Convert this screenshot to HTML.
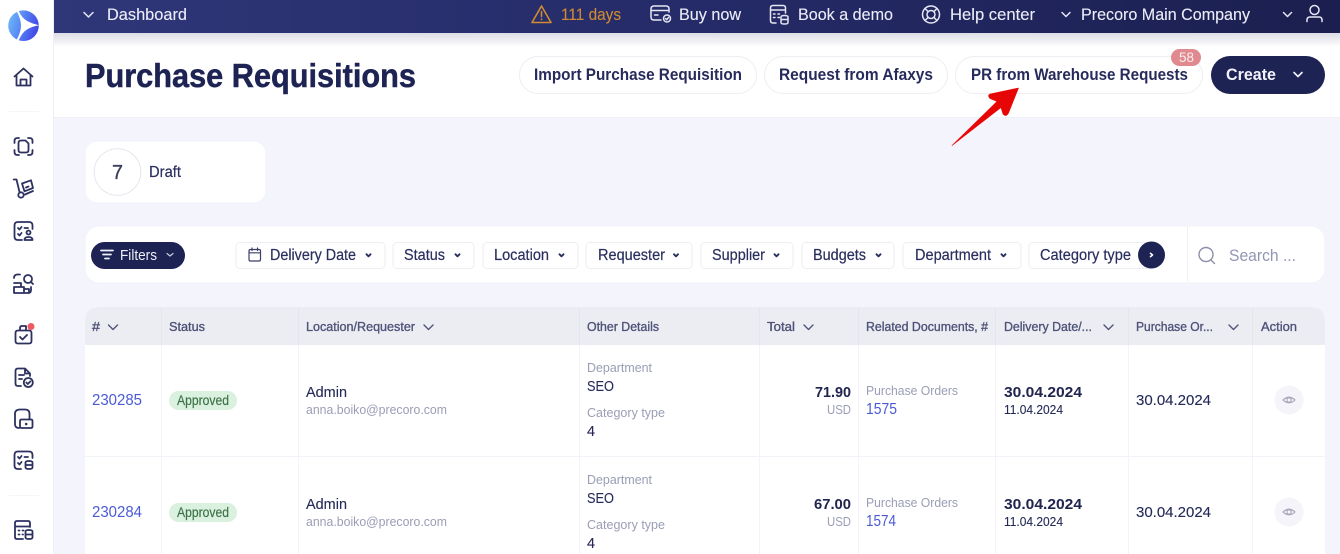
<!DOCTYPE html>
<html><head><meta charset="utf-8"><title>Purchase Requisitions</title>
<style>
html,body{margin:0;padding:0;background:#f4f5fc;overflow:hidden}
svg{display:block;filter:blur(.3px)}
text{font-family:"Liberation Sans",sans-serif;white-space:pre}
.nav{font-size:17px;fill:#eceDf8;stroke:#eceDf8;stroke-width:.12}
.btn{font-size:16.5px;font-weight:bold;fill:#262b5c}
.f{font-size:15.5px;fill:#2a2f5e;stroke:#2a2f5e;stroke-width:.2}
.h{font-size:13px;fill:#4f5378;stroke:#4f5378;stroke-width:.35}
.b{font-size:15px;fill:#252a58;stroke:#252a58;stroke-width:.12}
.g{font-size:13px;fill:#9a9db5}
.l{font-size:15.5px;fill:#4a5ad6}
.bb{font-size:15px;font-weight:bold;fill:#20254f}
.ap{font-size:13.5px;fill:#3d7047;stroke:#3d7047;stroke-width:.15}
.s{fill:none;stroke:#2c3160;stroke-width:1.8;stroke-linecap:round;stroke-linejoin:round}
.w{fill:none;stroke:#e6e7f3;stroke-width:1.5;stroke-linecap:round;stroke-linejoin:round}
.c{fill:none;stroke:#2a2f5e;stroke-width:1.9;stroke-linecap:round;stroke-linejoin:round}
.hc{fill:none;stroke:#4f5378;stroke-width:1.4;stroke-linecap:round;stroke-linejoin:round}
</style></head><body>
<svg width="1340" height="554" viewBox="0 0 1340 554" xmlns="http://www.w3.org/2000/svg">
<defs>
<linearGradient id="top" x1="0" x2="1" y1="0" y2="0"><stop offset="0" stop-color="#2f3779"/><stop offset=".5" stop-color="#252b68"/><stop offset="1" stop-color="#1b1f4f"/></linearGradient>
<linearGradient id="shd" x1="0" x2="0" y1="0" y2="1"><stop offset="0" stop-color="#8a8ca8" stop-opacity=".3"/><stop offset="1" stop-color="#8a8ca8" stop-opacity="0"/></linearGradient>
<linearGradient id="logo" x1="0" x2="1" y1="0" y2=".3"><stop offset="0" stop-color="#6ec0fa"/><stop offset=".45" stop-color="#5c8ff5"/><stop offset="1" stop-color="#434ce8"/></linearGradient>
</defs>
<rect width="1340" height="554" fill="#f4f5fc"/>
<!-- sidebar -->
<rect width="54" height="554" fill="#fff"/>
<circle cx="23.500" cy="25.700" r="15.300" fill="url(#logo)"/>
<path d="M16.500 11L18.500 10.600Q22 18.500 28 21.500Q33 24 39 25.300Q32 26.500 27 29.500Q22 32.500 18.500 40.600L16.500 40.200Q21 32 21 25.500Q21 19 16.500 11Z" fill="#fff"/>
<path class="s" d="M14.500 76.500L23.500 68.500L32.500 76.500M16.500 75V85.500H30.500V75M20.500 85.500V79.500H26.500V85.500"/>
<line x1="9" x2="39" y1="111.500" y2="111.500" stroke="#f6f6fa"/>
<path class="s" d="M14.500 143V141Q14.500 138 17.500 138H19M28 138H29.500Q32.500 138 32.500 141V143M32.500 150V152Q32.500 155 29.500 155H28M19 155H17.500Q14.500 155 14.500 152V150"/>
<path class="s" d="M18.500 143Q18.500 140.500 21 140.500H25.500L28.500 143.500V150Q28.500 152.500 26 152.500H21Q18.500 152.500 18.500 150Z"/>
<path class="s" d="M13.700 179.500H16.500L19.500 192M22 183.500L31 180.300L33 188L24.500 191.300ZM25 194.500L33 191M26 187.500L28.500 186.500"/><circle class="s" cx="21" cy="195" r="2.700"/>
<path class="s" d="M22 240H18Q14.500 240 14.500 236.500V225.500Q14.500 222 18 222H29Q32.500 222 32.500 225.500V229M18 228L19.500 229.500L21.500 227M18 234L19.500 235.500L21.500 233M24.500 228H28"/><circle class="s" cx="28.500" cy="232.500" r="2"/><path class="s" d="M24.500 240Q24.500 237 28.500 237Q32.500 237 32.500 240Z"/>
<circle class="s" cx="28" cy="279" r="4"/><path class="s" d="M31 282L33 284M14 278Q14 275 17 274.500H20M14 287H24V293H14ZM14 283H21V287M24 289H29V293H24M31 287V290Q31 292.500 29 293"/>
<path class="s" d="M18 330.500H29Q31.500 330.500 31.500 333V341Q31.500 343.500 29 343.500H18Q15.500 343.500 15.500 341V333Q15.500 330.500 18 330.500ZM20 330V328Q20 326 22 326H26V330M20 337L22.500 339.500L27 335"/>
<circle cx="31" cy="326.500" r="3.500" fill="#ee5a60"/>
<path class="s" d="M21 386H18Q15.500 386 15.500 383.500V371Q15.500 368.500 18 368.500H25L30 373.500V376M25 368.500V373.500H30M19 375H24M19 379H22"/><circle class="s" cx="28.300" cy="382.500" r="4.500"/><path class="s" d="M26.300 382.500L27.800 384L30.300 381.500"/>
<path class="s" d="M15 424V414Q15 409.500 20 409.500H25Q29.500 409.500 29.500 414V419M15 424Q15 428 19 428M21.500 419.500H31Q32.500 419.500 32.500 421V426.500Q32.500 428 31 428H21.500Q20 428 20 426.500V421Q20 419.500 21.500 419.500Z"/><circle cx="26.200" cy="424" r="1.300" fill="#2c3160"/>
<path class="s" d="M21 469H18Q14.500 469 14.500 465.500V455Q14.500 451.500 18 451.500H29Q32.500 451.500 32.500 455V458M18 457L19.500 458.500L21.500 456M18 463L19.500 464.500L21.500 462M24.500 457H28"/><path class="s" d="M25.500 462.500Q25.500 461 29 461Q32.500 461 32.500 462.500V467.500Q32.500 469 29 469Q25.500 469 25.500 467.500ZM25.500 465H32.500"/>
<line x1="9" x2="39" y1="495.500" y2="495.500" stroke="#f6f6fa"/>
<path class="s" d="M23 539H17Q15 539 15 537V523Q15 521 17 521H28Q30 521 30 523V527M15 526.500H30M18.500 530.500H19.500M22.500 530.500H23.500M18.500 534.500H19.500M22.500 534.500H23"/><path class="s" d="M25.500 531.500Q25.500 530 29 530Q32.500 530 32.500 531.500V537.500Q32.500 539 29 539Q25.500 539 25.500 537.500ZM25.500 534.500H32.500"/>
<rect x="53" y="0" width="1" height="554" fill="#eef0f7"/>
<!-- header -->
<rect x="54" y="33" width="1286" height="84" fill="#fff"/>
<rect x="54" y="117" width="1286" height="1" fill="#eef0f6"/>
<rect x="54" y="33" width="1286" height="14" fill="url(#shd)"/>
<rect x="54" width="1286" height="33" fill="url(#top)"/>
<!-- top nav -->
<path class="w" d="M84 12.500L88.500 17L93 12.500"/>
<text class="nav" x="107" y="20" textLength="80" lengthAdjust="spacingAndGlyphs">Dashboard</text>
<path d="M541.500 6L551 22.500H532Z" fill="none" stroke="#d08a32" stroke-width="1.600" stroke-linejoin="round"/><path d="M541.500 11.500V16.500M541.500 19V19.500" stroke="#d08a32" stroke-width="1.600" stroke-linecap="round"/>
<text class="nav" x="561" y="20" textLength="60" lengthAdjust="spacingAndGlyphs" style="fill:#d08a32;stroke:#d08a32">111 days</text>
<path class="w" d="M661 20H654Q651 20 651 17V9Q651 6 654 6H666Q669 6 669 9V12M651 10.500H669M654.500 15H658"/><circle class="w" cx="667" cy="18.500" r="3.500"/><path class="w" d="M665.500 18.500L666.700 19.700L668.500 17.500"/>
<text class="nav" x="679" y="20" textLength="62" lengthAdjust="spacingAndGlyphs">Buy now</text>
<path class="w" d="M776 23H773Q770.500 23 770.500 20.500V8Q770.500 5.500 773 5.500H783Q785.500 5.500 785.500 8V13M770.500 10H785.500M773.500 14H775M778 14H779.500M773.500 17.500H775M778 17.500H779.500"/><path class="w" d="M781 17Q781 15.500 784.500 15.500Q788 15.500 788 17V22.500Q788 24 784.500 24Q781 24 781 22.500ZM781 19.500H788"/>
<text class="nav" x="798" y="20" textLength="95" lengthAdjust="spacingAndGlyphs">Book a demo</text>
<circle class="w" cx="931" cy="14.500" r="8.500"/><circle class="w" cx="931" cy="14.500" r="4"/><path class="w" d="M925 8.500L928 11.500M937 8.500L934 11.500M925 20.500L928 17.500M937 20.500L934 17.500"/>
<text class="nav" x="950" y="20" textLength="85" lengthAdjust="spacingAndGlyphs">Help center</text>
<path class="w" d="M1062 12.500L1066 16.500L1070 12.500"/>
<text class="nav" x="1081" y="20" textLength="169" lengthAdjust="spacingAndGlyphs">Precoro Main Company</text>
<path class="w" d="M1283.500 12.500L1287.500 16.500L1291.500 12.500"/>
<circle class="w" cx="1314.500" cy="10" r="4.500"/><path class="w" d="M1307 21.500V20Q1307 17 1310 17H1319Q1322 17 1322 20V21.500"/>
<!-- title -->
<text x="85" y="87" font-size="33" font-weight="bold" fill="#1d2353" stroke="#1d2353" stroke-width=".5" textLength="331" lengthAdjust="spacingAndGlyphs">Purchase Requisitions</text>
<!-- buttons -->
<rect x="519.500" y="56.500" width="237" height="37" rx="18.500" fill="#fff" stroke="#eceef3"/>
<text class="btn" x="534" y="80" textLength="208" lengthAdjust="spacingAndGlyphs">Import Purchase Requisition</text>
<rect x="764.500" y="56.500" width="183" height="37" rx="18.500" fill="#fff" stroke="#eceef3"/>
<text class="btn" x="779" y="80" textLength="154" lengthAdjust="spacingAndGlyphs">Request from Afaxys</text>
<rect x="955.500" y="56.500" width="247" height="37" rx="18.500" fill="#fff" stroke="#eceef3"/>
<text class="btn" x="971" y="80" textLength="217" lengthAdjust="spacingAndGlyphs">PR from Warehouse Requests</text>
<rect x="1171" y="49" width="30" height="17" rx="8.500" fill="#e08a8f"/>
<text x="1179" y="62" font-size="13.500" fill="#fbeeee" textLength="15" lengthAdjust="spacingAndGlyphs">58</text>
<rect x="1211" y="56" width="114" height="38" rx="19" fill="#1d2353"/>
<text x="1226" y="80" font-size="16.500" font-weight="bold" fill="#f2f3fa" textLength="50" lengthAdjust="spacingAndGlyphs">Create</text>
<path d="M1294 72.500L1298 76.500L1302 72.500" fill="none" stroke="#f2f3fa" stroke-width="1.600" stroke-linecap="round" stroke-linejoin="round"/>
<!-- red arrow -->
<path d="M952 145.500L997 101.500L990 98.500Q987 95.500 990 94L1018.500 88L1008.500 113Q1006 117.500 1003 114L1001 107.500Z" fill="#e60606" stroke="#ee0808" stroke-width=".6" stroke-linejoin="round"/>
<!-- draft card -->
<rect x="85" y="141" width="181" height="62" rx="12" fill="#fff" stroke="#f1f2f9"/>
<circle cx="117.500" cy="172" r="23.300" fill="#fff" stroke="#e6e7ee"/>
<text x="112" y="179" font-size="20.500" fill="#3c3f5c" stroke="#3c3f5c" stroke-width=".35" textLength="11" lengthAdjust="spacingAndGlyphs">7</text>
<text class="f" x="149" y="177" textLength="32" lengthAdjust="spacingAndGlyphs">Draft</text>
<!-- filters card -->
<rect x="85" y="226" width="1240" height="57" rx="14" fill="#fff" stroke="#f1f2f9"/>
<rect x="91" y="242" width="94" height="27" rx="13.500" fill="#1d2353"/>
<path d="M101 250.500H113M103 254.500H111M105 258.500H109" stroke="#eef0fa" stroke-width="1.800" stroke-linecap="round"/>
<text x="120" y="260" font-size="14.500" fill="#eef0fa" textLength="37" lengthAdjust="spacingAndGlyphs">Filters</text>
<path d="M167 253.500L170 256L173 253.500" fill="none" stroke="#c8cbe0" stroke-width="1.200" stroke-linecap="round" stroke-linejoin="round"/>
<rect x="236" y="242.500" width="149" height="26" rx="4" fill="#fff" stroke="#eceef3"/>
<rect x="393" y="242.500" width="81" height="26" rx="4" fill="#fff" stroke="#eceef3"/>
<rect x="483" y="242.500" width="95" height="26" rx="4" fill="#fff" stroke="#eceef3"/>
<rect x="586" y="242.500" width="106" height="26" rx="4" fill="#fff" stroke="#eceef3"/>
<rect x="701" y="242.500" width="92" height="26" rx="4" fill="#fff" stroke="#eceef3"/>
<rect x="802" y="242.500" width="92" height="26" rx="4" fill="#fff" stroke="#eceef3"/>
<rect x="903" y="242.500" width="118" height="26" rx="4" fill="#fff" stroke="#eceef3"/>
<rect x="1029" y="242.500" width="125" height="26" rx="4" fill="#fff" stroke="#eceef3"/>
<path d="M249 251Q249 249.500 250.500 249.500H259Q260.500 249.500 260.500 251V259.500Q260.500 261 259 261H250.500Q249 261 249 259.500ZM249 252.800H260.500M252 248V250.500M257.500 248V250.500" fill="none" stroke="#3a3f6a" stroke-width="1.200" stroke-linecap="round"/>
<text class="f" x="270" y="260" textLength="86" lengthAdjust="spacingAndGlyphs">Delivery Date</text>
<path class="c" d="M366.500 254.300L368.500 256.300L370.500 254.300"/>
<text class="f" x="404" y="260" textLength="41" lengthAdjust="spacingAndGlyphs">Status</text>
<path class="c" d="M455.500 254.300L457.500 256.300L459.500 254.300"/>
<text class="f" x="494" y="260" textLength="55" lengthAdjust="spacingAndGlyphs">Location</text>
<path class="c" d="M559.500 254.300L561.500 256.300L563.500 254.300"/>
<text class="f" x="598" y="260" textLength="67" lengthAdjust="spacingAndGlyphs">Requester</text>
<path class="c" d="M674 254.300L676 256.300L678 254.300"/>
<text class="f" x="712" y="260" textLength="53" lengthAdjust="spacingAndGlyphs">Supplier</text>
<path class="c" d="M774.500 254.300L776.500 256.300L778.500 254.300"/>
<text class="f" x="813" y="260" textLength="53" lengthAdjust="spacingAndGlyphs">Budgets</text>
<path class="c" d="M876.500 254.300L878.500 256.300L880.500 254.300"/>
<text class="f" x="915" y="260" textLength="76" lengthAdjust="spacingAndGlyphs">Department</text>
<path class="c" d="M1001.500 254.300L1003.500 256.300L1005.500 254.300"/>
<text class="f" x="1040" y="260" textLength="91" lengthAdjust="spacingAndGlyphs">Category type</text>
<circle cx="1151.500" cy="255" r="13.500" fill="#1d2353"/>
<path d="M1150.500 253.300L1152.500 255L1150.500 256.700" fill="none" stroke="#fff" stroke-width="1.600" stroke-linecap="round" stroke-linejoin="round"/>
<rect x="1187" y="227" width="1" height="55" fill="#f0f1f6"/>
<circle cx="1206" cy="254.500" r="7" fill="none" stroke="#8d90ab" stroke-width="1.400"/><path d="M1211 260L1214.500 263.500" stroke="#8d90ab" stroke-width="1.400" stroke-linecap="round"/>
<text x="1229" y="261" font-size="16.500" fill="#9396b2" textLength="67" lengthAdjust="spacingAndGlyphs">Search ...</text>
<!-- table -->
<path d="M85 321Q85 307 99 307H1311Q1325 307 1325 321V554H85Z" fill="#fff"/>
<path d="M85 345V321Q85 307 99 307H1311Q1325 307 1325 321V345Z" fill="#ecedf3"/>
<rect x="85" y="456" width="1240" height="1" fill="#f2f3f8"/>
<g fill="#e4e5ed"><rect x="161" y="307" width="1" height="38"/><rect x="298" y="307" width="1" height="38"/><rect x="579" y="307" width="1" height="38"/><rect x="759" y="307" width="1" height="38"/><rect x="858" y="307" width="1" height="38"/><rect x="995" y="307" width="1" height="38"/><rect x="1128" y="307" width="1" height="38"/><rect x="1252" y="307" width="1" height="38"/></g>
<g fill="#f3f4f8"><rect x="161" y="345" width="1" height="209"/><rect x="298" y="345" width="1" height="209"/><rect x="579" y="345" width="1" height="209"/><rect x="759" y="345" width="1" height="209"/><rect x="858" y="345" width="1" height="209"/><rect x="995" y="345" width="1" height="209"/><rect x="1128" y="345" width="1" height="209"/><rect x="1252" y="345" width="1" height="209"/></g>
<text class="h" x="92" y="331" textLength="8" lengthAdjust="spacingAndGlyphs">#</text>
<path class="hc" d="M108.500 325L113 329.500L117.500 325"/>
<text class="h" x="169" y="331" textLength="36" lengthAdjust="spacingAndGlyphs">Status</text>
<text class="h" x="306" y="331" textLength="109" lengthAdjust="spacingAndGlyphs">Location/Requester</text>
<path class="hc" d="M424 325L428.500 329.500L433 325"/>
<text class="h" x="587" y="331" textLength="72" lengthAdjust="spacingAndGlyphs">Other Details</text>
<text class="h" x="767" y="331" textLength="28" lengthAdjust="spacingAndGlyphs">Total</text>
<path class="hc" d="M804 325L808.500 329.500L813 325"/>
<text class="h" x="866" y="331" textLength="122" lengthAdjust="spacingAndGlyphs">Related Documents, #</text>
<text class="h" x="1004" y="331" textLength="88" lengthAdjust="spacingAndGlyphs">Delivery Date/...</text>
<path class="hc" d="M1104 325L1108.500 329.500L1113 325"/>
<text class="h" x="1136" y="331" textLength="77" lengthAdjust="spacingAndGlyphs">Purchase Or...</text>
<path class="hc" d="M1229 325L1233.500 329.500L1238 325"/>
<text class="h" x="1261" y="331" textLength="36" lengthAdjust="spacingAndGlyphs">Action</text>
<!-- row 1 -->
<text class="l" x="92" y="405" textLength="50" lengthAdjust="spacingAndGlyphs">230285</text>
<rect x="169" y="391" width="68" height="19" rx="9.500" fill="#d9f1de"/>
<text class="ap" x="177" y="405" textLength="52" lengthAdjust="spacingAndGlyphs">Approved</text>
<text class="b" x="306" y="397" textLength="41" lengthAdjust="spacingAndGlyphs">Admin</text>
<text class="g" x="306" y="414" textLength="141" lengthAdjust="spacingAndGlyphs">anna.boiko@precoro.com</text>
<text class="g" x="587" y="372" textLength="65" lengthAdjust="spacingAndGlyphs">Department</text>
<text class="b" x="587" y="391" textLength="27" lengthAdjust="spacingAndGlyphs">SEO</text>
<text class="g" x="587" y="417" textLength="78" lengthAdjust="spacingAndGlyphs">Category type</text>
<text class="b" x="587" y="436" textLength="8" lengthAdjust="spacingAndGlyphs">4</text>
<text class="bb" x="815" y="397" textLength="36" lengthAdjust="spacingAndGlyphs">71.90</text>
<text class="g" x="827" y="414" textLength="24" lengthAdjust="spacingAndGlyphs">USD</text>
<text class="g" x="866" y="395" textLength="92" lengthAdjust="spacingAndGlyphs">Purchase Orders</text>
<text class="l" x="866" y="414" textLength="31" lengthAdjust="spacingAndGlyphs">1575</text>
<text class="bb" x="1004" y="397" textLength="78" lengthAdjust="spacingAndGlyphs">30.04.2024</text>
<text class="b" x="1004" y="414" textLength="59" lengthAdjust="spacingAndGlyphs" style="font-size:13px">11.04.2024</text>
<text class="b" x="1136" y="405" textLength="75" lengthAdjust="spacingAndGlyphs">30.04.2024</text>
<circle cx="1289" cy="400" r="14.500" fill="#f5f4fb"/>
<path d="M1283 400Q1289 394.500 1295 400Q1289 405.500 1283 400Z" fill="none" stroke="#a3a5b8" stroke-width="1.100"/><circle cx="1289" cy="400" r="2.200" fill="none" stroke="#a3a5b8" stroke-width="1.100"/>
<!-- row 2 -->
<text class="l" x="92" y="517" textLength="50" lengthAdjust="spacingAndGlyphs">230284</text>
<rect x="169" y="503" width="68" height="19" rx="9.500" fill="#d9f1de"/>
<text class="ap" x="177" y="517" textLength="52" lengthAdjust="spacingAndGlyphs">Approved</text>
<text class="b" x="306" y="509" textLength="41" lengthAdjust="spacingAndGlyphs">Admin</text>
<text class="g" x="306" y="526" textLength="141" lengthAdjust="spacingAndGlyphs">anna.boiko@precoro.com</text>
<text class="g" x="587" y="484" textLength="65" lengthAdjust="spacingAndGlyphs">Department</text>
<text class="b" x="587" y="503" textLength="27" lengthAdjust="spacingAndGlyphs">SEO</text>
<text class="g" x="587" y="529" textLength="78" lengthAdjust="spacingAndGlyphs">Category type</text>
<text class="b" x="587" y="548" textLength="8" lengthAdjust="spacingAndGlyphs">4</text>
<text class="bb" x="814" y="509" textLength="37" lengthAdjust="spacingAndGlyphs">67.00</text>
<text class="g" x="827" y="526" textLength="24" lengthAdjust="spacingAndGlyphs">USD</text>
<text class="g" x="866" y="507" textLength="92" lengthAdjust="spacingAndGlyphs">Purchase Orders</text>
<text class="l" x="866" y="526" textLength="30" lengthAdjust="spacingAndGlyphs">1574</text>
<text class="bb" x="1004" y="509" textLength="78" lengthAdjust="spacingAndGlyphs">30.04.2024</text>
<text class="b" x="1004" y="526" textLength="59" lengthAdjust="spacingAndGlyphs" style="font-size:13px">11.04.2024</text>
<text class="b" x="1136" y="517" textLength="75" lengthAdjust="spacingAndGlyphs">30.04.2024</text>
<circle cx="1289" cy="512" r="14.500" fill="#f5f4fb"/>
<path d="M1283 512Q1289 506.500 1295 512Q1289 517.500 1283 512Z" fill="none" stroke="#a3a5b8" stroke-width="1.100"/><circle cx="1289" cy="512" r="2.200" fill="none" stroke="#a3a5b8" stroke-width="1.100"/>
</svg>
</body></html>
